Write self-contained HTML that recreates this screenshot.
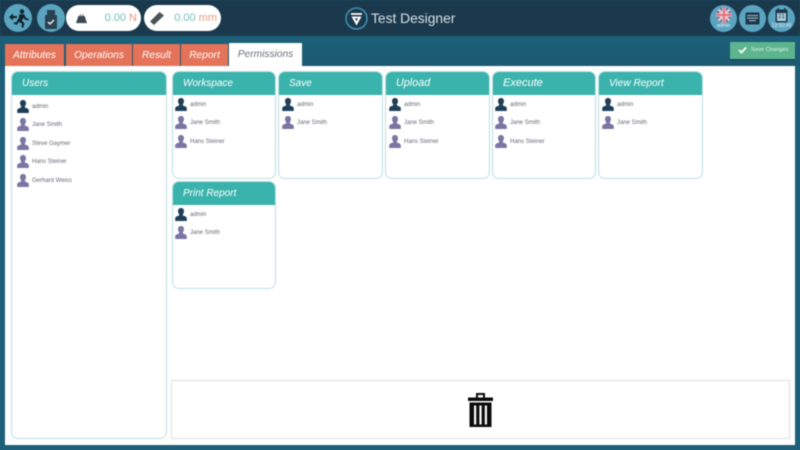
<!DOCTYPE html>
<html><head><meta charset="utf-8">
<style>
*{box-sizing:border-box}
html,body{margin:0;padding:0}
body{width:800px;height:450px;position:relative;overflow:hidden;background:#1d5f78;font-family:"Liberation Sans",sans-serif}
#w{position:absolute;left:0;top:0;width:800px;height:450px;filter:blur(.4px)}
.a{position:absolute}
#top{left:0;top:0;width:800px;height:36px;background:#1b394c}
#strip{left:0;top:36px;width:800px;height:30px;background:linear-gradient(#1c6079,#1d5a72)}
#main{left:5px;top:66px;width:790px;height:379px;background:#fff}
.rb{position:absolute;border-radius:50%;background:#5aa4c0;width:28px;height:28px;top:4px}
.pill{position:absolute;background:#fff;border-radius:13px;height:26px;top:5px}
.tab{position:absolute;top:44px;height:22px;background:#e4735a;color:#fff;font-style:italic;font-size:10.2px;line-height:23px;text-align:center;white-space:nowrap}
.p{position:absolute;background:#fff;border:1px solid #bfe0e2;border-radius:7px;overflow:hidden}
.h{position:absolute;left:-1px;top:-1px;right:-1px;height:24px;background:#3bb3ad;color:#fff;font-style:italic;font-size:11.5px;line-height:25px;padding-left:11px;white-space:nowrap}
.u{position:absolute;font-size:6px;line-height:8px;color:#666b74;white-space:nowrap;margin-top:1px}
svg.i{position:absolute;width:12px;height:13px}
</style></head><body>
<div id="w">
<div class="a" id="top"></div>
<div class="a" id="strip"></div>
<div class="a" id="main"></div>

<div class="rb" style="left:4px"></div>
<svg class="a" style="left:8px;top:8px" width="22" height="20" viewBox="0 0 22 20"><path d="M1 9l4-3.500v2.500h4v2H5v2.500z" fill="#10212e"/><circle cx="14" cy="3.500" r="2.200" fill="#10212e"/><path d="M11 6.500l5-.5 2 4 3 1-.6 1.600-4-1.300-1-1.600-1.500 3 2.500 2.500-1 4.500-2-.4.700-3.300-3-2.200-2 2.800-3.500-.6.400-1.800 2.200.3 3-5.500-.2-2.500z" fill="#10212e"/></svg>
<div class="rb" style="left:37px"></div>
<svg class="a" style="left:44px;top:10px" width="14" height="19" viewBox="0 0 14 19"><rect x="3" y="0" width="8" height="5" fill="#2c4150"/><rect x="1" y="5" width="12" height="14" rx="1" fill="#2a4252"/><path d="M4 12l2 2 4-4" stroke="#fff" stroke-width="1.300" fill="none"/></svg>

<div class="pill" style="left:66px;width:75px"></div>
<svg class="a" style="left:76px;top:12px" width="11" height="12" viewBox="0 0 14 13"><path d="M4.500 4a2.500 2.500 0 1 1 5 0h1.500l3 9H0l3-9z" fill="#3b4a52"/><circle cx="7" cy="3" r="1.200" fill="#fff"/></svg>
<div class="a" style="left:92px;top:11px;width:45px;text-align:right;font-size:11px;line-height:15px;color:#78bdbd;white-space:nowrap">0.00 <span style="color:#eb9a7e">N</span></div>
<div class="pill" style="left:144px;width:77px"></div>
<svg class="a" style="left:149px;top:11px" width="16" height="15" viewBox="0 0 16 15"><path d="M1 10.500L10.500 1l4.500 3.500L5 14z" fill="#4a5358"/></svg>
<div class="a" style="left:170px;top:11px;width:47px;text-align:right;font-size:11px;line-height:15px;color:#78bdbd;white-space:nowrap">0.00 <span style="color:#eb9a7e">mm</span></div>

<svg class="a" style="left:344px;top:6px" width="25" height="25" viewBox="0 0 25 25"><circle cx="12.500" cy="12.500" r="10.500" fill="none" stroke="#3f93b4" stroke-width="1.500"/><path d="M7 8h11" stroke="#fff" stroke-width="1.800"/><path d="M7.500 10.500h10l-5 9z" fill="#fff"/><path d="M11 12.200h3l-1.500 3z" fill="#1b394c"/></svg>
<div class="a" style="left:371px;top:9px;font-size:13.8px;line-height:20px;color:#d5e0e6;white-space:nowrap">Test Designer</div>

<div class="rb" style="left:710px;top:5px;width:27px;height:27px"></div>
<svg class="a" style="left:716px;top:7px" width="16" height="16" viewBox="0 0 16 16"><circle cx="8" cy="8" r="7.500" fill="#5a6f9c"/><path d="M2.500 2.500l11 11M13.500 2.500l-11 11" stroke="#ecc5cb" stroke-width="2.600"/><path d="M8 0v16M0 8h16" stroke="#f3d6d8" stroke-width="3.600"/><path d="M8 0v16M0 8h16" stroke="#e4707a" stroke-width="2"/></svg>
<div class="a" style="left:710px;top:23px;width:27px;text-align:center;font-size:5px;line-height:6px;color:#e8f2f6">admin</div>
<div class="rb" style="left:739px;top:5px;width:27px;height:27px"></div>
<svg class="a" style="left:745px;top:12px" width="15" height="13" viewBox="0 0 15 13"><rect x="0.500" y="0.500" width="14" height="12" rx="1" fill="#1e3648"/><rect x="2" y="3" width="11" height="1.200" fill="#8fb0bf"/><rect x="2" y="5.500" width="11" height="1.200" fill="#8fb0bf"/><rect x="4" y="8" width="7" height="1.200" fill="#8fb0bf"/></svg>
<div class="rb" style="left:768px;top:5px;width:27px;height:27px"></div>
<svg class="a" style="left:775px;top:8px" width="13" height="15" viewBox="0 0 13 15"><rect x="0.500" y="1.500" width="12" height="13" rx="1" fill="#1e3648"/><rect x="2.500" y="0" width="1.500" height="3" fill="#1e3648"/><rect x="9" y="0" width="1.500" height="3" fill="#1e3648"/><rect x="2" y="5" width="9" height="8" fill="#a9cfe0"/></svg>
<div class="a" style="left:776px;top:14px;width:11px;text-align:center;font-size:6px;line-height:7px;color:#1e3648">21</div>
<div class="a" style="left:768px;top:23px;width:27px;text-align:center;font-size:5px;line-height:6px;color:#e8f2f6">13:50:49</div>

<div class="a" style="left:730px;top:42px;width:65px;height:17px;background:#5cb58f;box-shadow:0 1px 1px rgba(0,0,0,.3)"></div>
<svg class="a" style="left:738px;top:46px" width="9" height="8" viewBox="0 0 9 8"><path d="M1 4l2.500 2.500L8 1.500" stroke="#fff" stroke-width="1.800" fill="none"/></svg>
<div class="a" style="left:751px;top:46px;font-size:5.700px;line-height:8px;color:#e4f3ec;white-space:nowrap">Save Changes</div>

<div class="tab" style="left:5px;width:59px">Attributes</div>
<div class="tab" style="left:66px;width:66px">Operations</div>
<div class="tab" style="left:133px;width:47px">Result</div>
<div class="tab" style="left:181px;width:47px">Report</div>
<div class="tab" style="left:229px;top:43px;height:23px;width:73px;background:#fff;color:#6b7178;line-height:24px">Permissions</div>

<svg width="0" height="0" style="position:absolute"><defs>
<path id="pn" d="M6 0c1.900 0 3 1.300 3 3.100 0 1.300-.5 2.400-1.100 3v1.400c1.500.5 3.600 1.100 3.900 2.500V13H.2v-3c.3-1.400 2.400-2 3.900-2.500V6.100C3.500 5.500 3 4.400 3 3.100 3 1.300 4.100 0 6 0z"/>
</defs></svg>

<div class="p" style="left:11px;top:71px;width:156px;height:368px"><div class="h" style="font-size:10px">Users</div></div>
<svg class="i" style="left:17px;top:100px;fill:#1f3f58"><use href="#pn"/></svg><div class="u" style="left:32px;top:102px">admin</div>
<svg class="i" style="left:17px;top:118px;fill:#7a76a4"><use href="#pn"/></svg><div class="u" style="left:32px;top:120px">Jane Smith</div>
<svg class="i" style="left:17px;top:137px;fill:#7a76a4"><use href="#pn"/></svg><div class="u" style="left:32px;top:139px">Steve Gaymer</div>
<svg class="i" style="left:17px;top:155px;fill:#7a76a4"><use href="#pn"/></svg><div class="u" style="left:32px;top:157px">Hans Steiner</div>
<svg class="i" style="left:17px;top:174px;fill:#7a76a4"><use href="#pn"/></svg><div class="u" style="left:32px;top:176px">Gerhard Weiss</div>

<div class="p" style="left:172px;top:71px;width:104px;height:108px"><div class="h" style="font-size:10px">Workspace</div></div>
<svg class="i" style="left:175px;top:98px;fill:#1f3f58"><use href="#pn"/></svg><div class="u" style="left:190px;top:100px">admin</div>
<svg class="i" style="left:175px;top:116px;fill:#7a76a4"><use href="#pn"/></svg><div class="u" style="left:190px;top:118px">Jane Smith</div>
<svg class="i" style="left:175px;top:135px;fill:#7a76a4"><use href="#pn"/></svg><div class="u" style="left:190px;top:137px">Hans Steiner</div>

<div class="p" style="left:278px;top:71px;width:105px;height:108px"><div class="h" style="font-size:10px">Save</div></div>
<svg class="i" style="left:282px;top:98px;fill:#1f3f58"><use href="#pn"/></svg><div class="u" style="left:297px;top:100px">admin</div>
<svg class="i" style="left:282px;top:116px;fill:#7a76a4"><use href="#pn"/></svg><div class="u" style="left:297px;top:118px">Jane Smith</div>

<div class="p" style="left:385px;top:71px;width:105px;height:108px"><div class="h" style="font-size:10.800px">Upload</div></div>
<svg class="i" style="left:389px;top:98px;fill:#1f3f58"><use href="#pn"/></svg><div class="u" style="left:404px;top:100px">admin</div>
<svg class="i" style="left:389px;top:116px;fill:#7a76a4"><use href="#pn"/></svg><div class="u" style="left:404px;top:118px">Jane Smith</div>
<svg class="i" style="left:389px;top:135px;fill:#7a76a4"><use href="#pn"/></svg><div class="u" style="left:404px;top:137px">Hans Steiner</div>

<div class="p" style="left:492px;top:71px;width:104px;height:108px"><div class="h" style="font-size:11px">Execute</div></div>
<svg class="i" style="left:495px;top:98px;fill:#1f3f58"><use href="#pn"/></svg><div class="u" style="left:510px;top:100px">admin</div>
<svg class="i" style="left:495px;top:116px;fill:#7a76a4"><use href="#pn"/></svg><div class="u" style="left:510px;top:118px">Jane Smith</div>
<svg class="i" style="left:495px;top:135px;fill:#7a76a4"><use href="#pn"/></svg><div class="u" style="left:510px;top:137px">Hans Steiner</div>

<div class="p" style="left:598px;top:71px;width:105px;height:108px"><div class="h" style="font-size:10.100px">View Report</div></div>
<svg class="i" style="left:602px;top:98px;fill:#1f3f58"><use href="#pn"/></svg><div class="u" style="left:617px;top:100px">admin</div>
<svg class="i" style="left:602px;top:116px;fill:#7a76a4"><use href="#pn"/></svg><div class="u" style="left:617px;top:118px">Jane Smith</div>

<div class="p" style="left:172px;top:181px;width:104px;height:108px"><div class="h" style="font-size:10px">Print Report</div></div>
<svg class="i" style="left:175px;top:208px;fill:#1f3f58"><use href="#pn"/></svg><div class="u" style="left:190px;top:210px">admin</div>
<svg class="i" style="left:175px;top:226px;fill:#7a76a4"><use href="#pn"/></svg><div class="u" style="left:190px;top:228px">Jane Smith</div>

<div class="a" style="left:171px;top:380px;width:619px;height:59px;background:#fff;border:1px solid #dcdedc"></div>
<svg class="a" style="left:468px;top:393px" width="25" height="35" viewBox="0 0 25 35"><path d="M0 4.500h25V8H0zM8 4.500V0h9v4.500h-2V2h-5v2.500z" fill="#0c0c0c"/><path fill-rule="evenodd" d="M1.500 9.500h22V34h-22zM6 12.500v19h2.200v-19zM11.400 12.500v19h2.200v-19zM16.800 12.500v19H19v-19z" fill="#0c0c0c"/></svg>
</div>
</body></html>
